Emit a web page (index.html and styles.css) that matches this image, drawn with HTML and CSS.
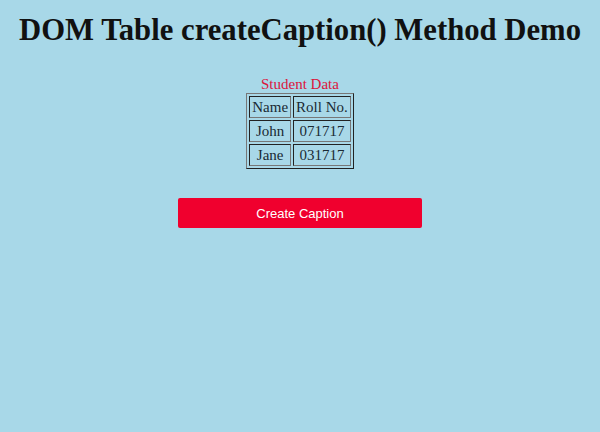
FILE: index.html
```html
<!DOCTYPE html>
<html>
<head>
<meta charset="utf-8">
<link rel="stylesheet" href="styles.css">
</head>
<body class="page">
<h1 class="title">DOM Table createCaption() Method Demo</h1>
<table class="data" border="1">
<caption class="cap">Student Data</caption>
<tr><td>Name</td><td>Roll No.</td></tr>
<tr><td>John</td><td>071717</td></tr>
<tr><td>Jane</td><td>031717</td></tr>
</table>
<div class="actions">
<button class="btn">Create Caption</button>
</div>
</body>
</html>
```
FILE: styles.css
```css
.page {
  margin: 0;
  background: #a8d8e8;
  font-family: "Liberation Serif", serif;
  color: #111;
}
.title {
  margin: 12px 0 0;
  text-align: center;
  font-size: 30.7px;
  font-weight: bold;
  line-height: 37px;
}
.data {
  margin: 27px auto 0;
  border: 1px outset #777;
  border-collapse: separate;
  border-spacing: 2px;
  font-size: 15px;
  line-height: 18px;
  text-align: center;
  color: #1a2a33;
}
.data td {
  border: 1px inset #777;
  padding: 1px 2px;
}
.cap {
  color: #dc143c;
  font-size: 15px;
  line-height: 17px;
}
.actions {
  display: flex;
  justify-content: center;
  margin-top: 29px;
}
.btn {
  width: 244px;
  height: 30px;
  background: #f0002e;
  color: #fff;
  border: none;
  border-radius: 2px;
  font-family: "Liberation Sans", sans-serif;
  font-size: 13px;
}
```
